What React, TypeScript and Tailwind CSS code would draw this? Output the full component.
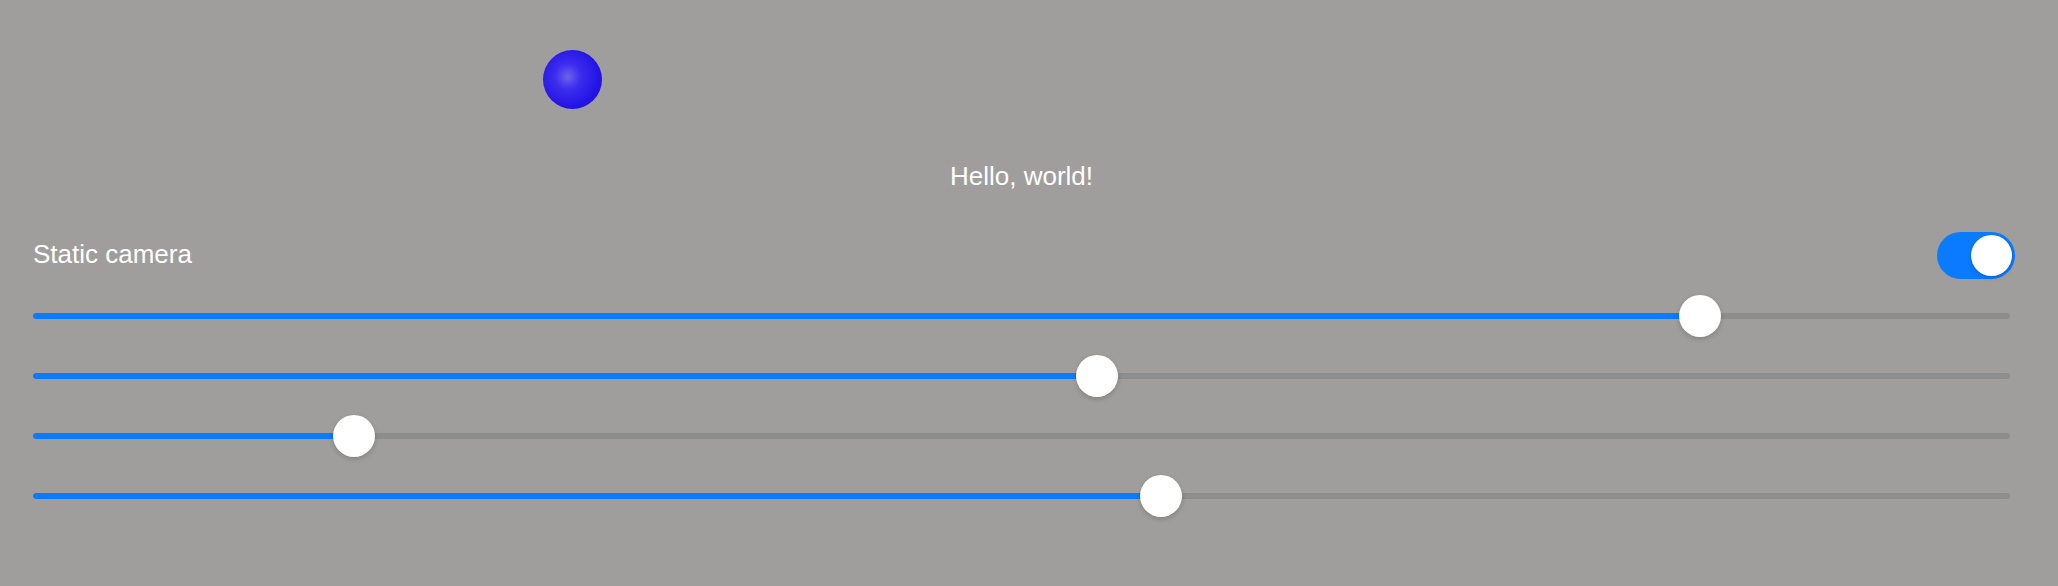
const sliders = [1667, 1064, 321, 1128];

function Slider({ center }: { center: number }) {
  return (
    <div className="relative h-[42px] flex items-center">
      <div className="w-full h-[6px] rounded-full bg-[#8e8d8d] overflow-hidden">
        <div className="h-full rounded-full bg-[#0a7aff]" style={{ width: center }} />
      </div>
      <div
        className="absolute top-0 w-[42px] h-[42px] rounded-full bg-white shadow-[0_2px_5px_rgba(0,0,0,0.18)]"
        style={{ left: center - 21 }}
      />
    </div>
  );
}

export default function App() {
  return (
    <main className="w-[2058px] h-[586px] bg-[#a09e9c] font-['Liberation_Sans',Arial,sans-serif] text-white pl-[33px] pr-[48px] pt-[50px] flex flex-col">
      <div className="h-[58px] flex">
        <div className="ml-[510px] w-[59px] h-[59px] rounded-full bg-[radial-gradient(circle_at_42%_45%,#6e63ea_0%,#3b2cee_28%,#2414e4_65%,#1a0bd2_100%)]" />
      </div>

      <p className="mt-[53px] h-[30px] text-[26px] leading-[30px] text-center">Hello, world!</p>

      <div className="mt-[41px] h-[47px] flex items-center justify-between">
        <span className="text-[26px] leading-[30px] pb-[4px]">Static camera</span>
        <div className="-mr-[5px] w-[78px] h-[47px] rounded-full bg-[#0a7aff] flex items-center justify-end pr-[3px]">
          <div className="w-[41px] h-[41px] rounded-full bg-white shadow-[0_2px_4px_rgba(0,0,0,0.15)]" />
        </div>
      </div>

      <div className="mt-[16px] flex flex-col gap-[18px]">
        {sliders.map((c, i) => (
          <Slider key={i} center={c} />
        ))}
      </div>
    </main>
  );
}
